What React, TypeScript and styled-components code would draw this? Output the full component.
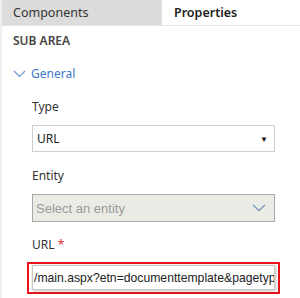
import { FC } from 'react';
import styled, { createGlobalStyle } from 'styled-components';

const GlobalStyle = createGlobalStyle`
  html, body {
    margin: 0;
    padding: 0;
    background: #ffffff;
  }
  body {
    font-family: "Noto Sans", "Open Sans", sans-serif;
  }
`

const App: FC = () => {
  return (
    <>
      <GlobalStyle />
      <Panel>
        <Tabs>
          <Tab>Components</Tab>
          <Tab active>Properties</Tab>
        </Tabs>
        <Body>
          <SectionTitle>SUB AREA</SectionTitle>
          <Group>
            <svg width="13" height="8" viewBox="0 0 13 8">
              <path d="M1 1 L6.5 6.5 L12 1" fill="none" stroke="#6f9ad6" strokeWidth="1.2" />
            </svg>
            <span>General</span>
          </Group>
          <Fields>
            <Label>Type</Label>
            <Select>
              <span>URL</span>
              <Arrow>▼</Arrow>
            </Select>
            <Label>Entity</Label>
            <Disabled>
              <span>Select an entity</span>
              <svg width="14" height="8" viewBox="0 0 14 8">
                <path d="M1 1 L7 6.5 L13 1" fill="none" stroke="#7e9bbb" strokeWidth="1.4" />
              </svg>
            </Disabled>
            <Label>URL <Req>*</Req></Label>
            <Highlight>
              <UrlInput>/main.aspx?etn=documenttemplate&amp;pagetyp</UrlInput>
            </Highlight>
          </Fields>
        </Body>
      </Panel>
    </>
  );
};

export default App;

const Panel = styled('div')`
  width: 300px;
  height: 298px;
  border-left: 2px solid #f0f0f0;
  box-sizing: border-box;
  overflow: hidden;
`

const Tabs = styled('div')`
  display: flex;
  height: 25px;
  border-bottom: 1px solid #e6e6e6;
`

const Tab = styled('div')<{ active?: boolean }>`
  flex: ${p => p.active ? '1 1 auto' : '0 0 160px'};
  padding-left: ${p => p.active ? 12 : 11}px;
  box-sizing: border-box;
  display: flex;
  align-items: center;
  font-size: 12.5px;
  font-weight: ${p => p.active ? 600 : 400};
  color: ${p => p.active ? '#222' : '#333'};
  background: ${p => p.active ? '#ffffff' : '#dcdcdc'};
`

const Body = styled('div')`
  padding: 6px 0 0 11px;
`

const SectionTitle = styled('div')`
  font-size: 12px;
  font-weight: 600;
  color: #444;
  line-height: 18px;
`

const Group = styled('div')`
  margin-top: 15px;
  display: flex;
  align-items: center;
  gap: 5px;
  font-size: 12px;
  color: #3c78c8;
  line-height: 18px;
`

const Fields = styled('div')`
  padding: 15px 0 0 19px;
  width: 243px;
  display: flex;
  flex-direction: column;
`

const Label = styled('div')`
  font-size: 12px;
  color: #333;
  line-height: 18px;
  margin-bottom: 9px;
`

const Req = styled('span')`
  color: #e03030;
`

const Select = styled('div')`
  height: 27px;
  border: 1px solid #cfcfcf;
  box-sizing: border-box;
  display: flex;
  align-items: center;
  justify-content: space-between;
  padding: 0 6px 0 4px;
  font-size: 12px;
  color: #222;
  margin-bottom: 15px;
`

const Arrow = styled('span')`
  font-size: 8px;
  color: #111;
`

const Disabled = styled('div')`
  height: 28px;
  border: 1px solid #a9a9a9;
  background: #ebebe6;
  box-sizing: border-box;
  display: flex;
  align-items: center;
  justify-content: space-between;
  padding: 0 8px 0 3px;
  font-family: "Liberation Sans", Arial, sans-serif;
  font-size: 13px;
  color: #9a9a9a;
  margin-bottom: 14px;
`

const Highlight = styled('div')`
  margin: -1px -5px 0;
  padding: 1px 3px 2px;
  border: 2px solid #e8141a;
`

const UrlInput = styled('div')`
  height: 25px;
  border: 1px solid #c8c8c8;
  box-shadow: 1px 1px 3px rgba(0, 0, 0, 0.25);
  box-sizing: border-box;
  display: flex;
  align-items: center;
  padding-left: 1px;
  font-family: "Liberation Sans", Arial, sans-serif;
  font-size: 12.2px;
  color: #222;
  white-space: nowrap;
  overflow: hidden;
`
